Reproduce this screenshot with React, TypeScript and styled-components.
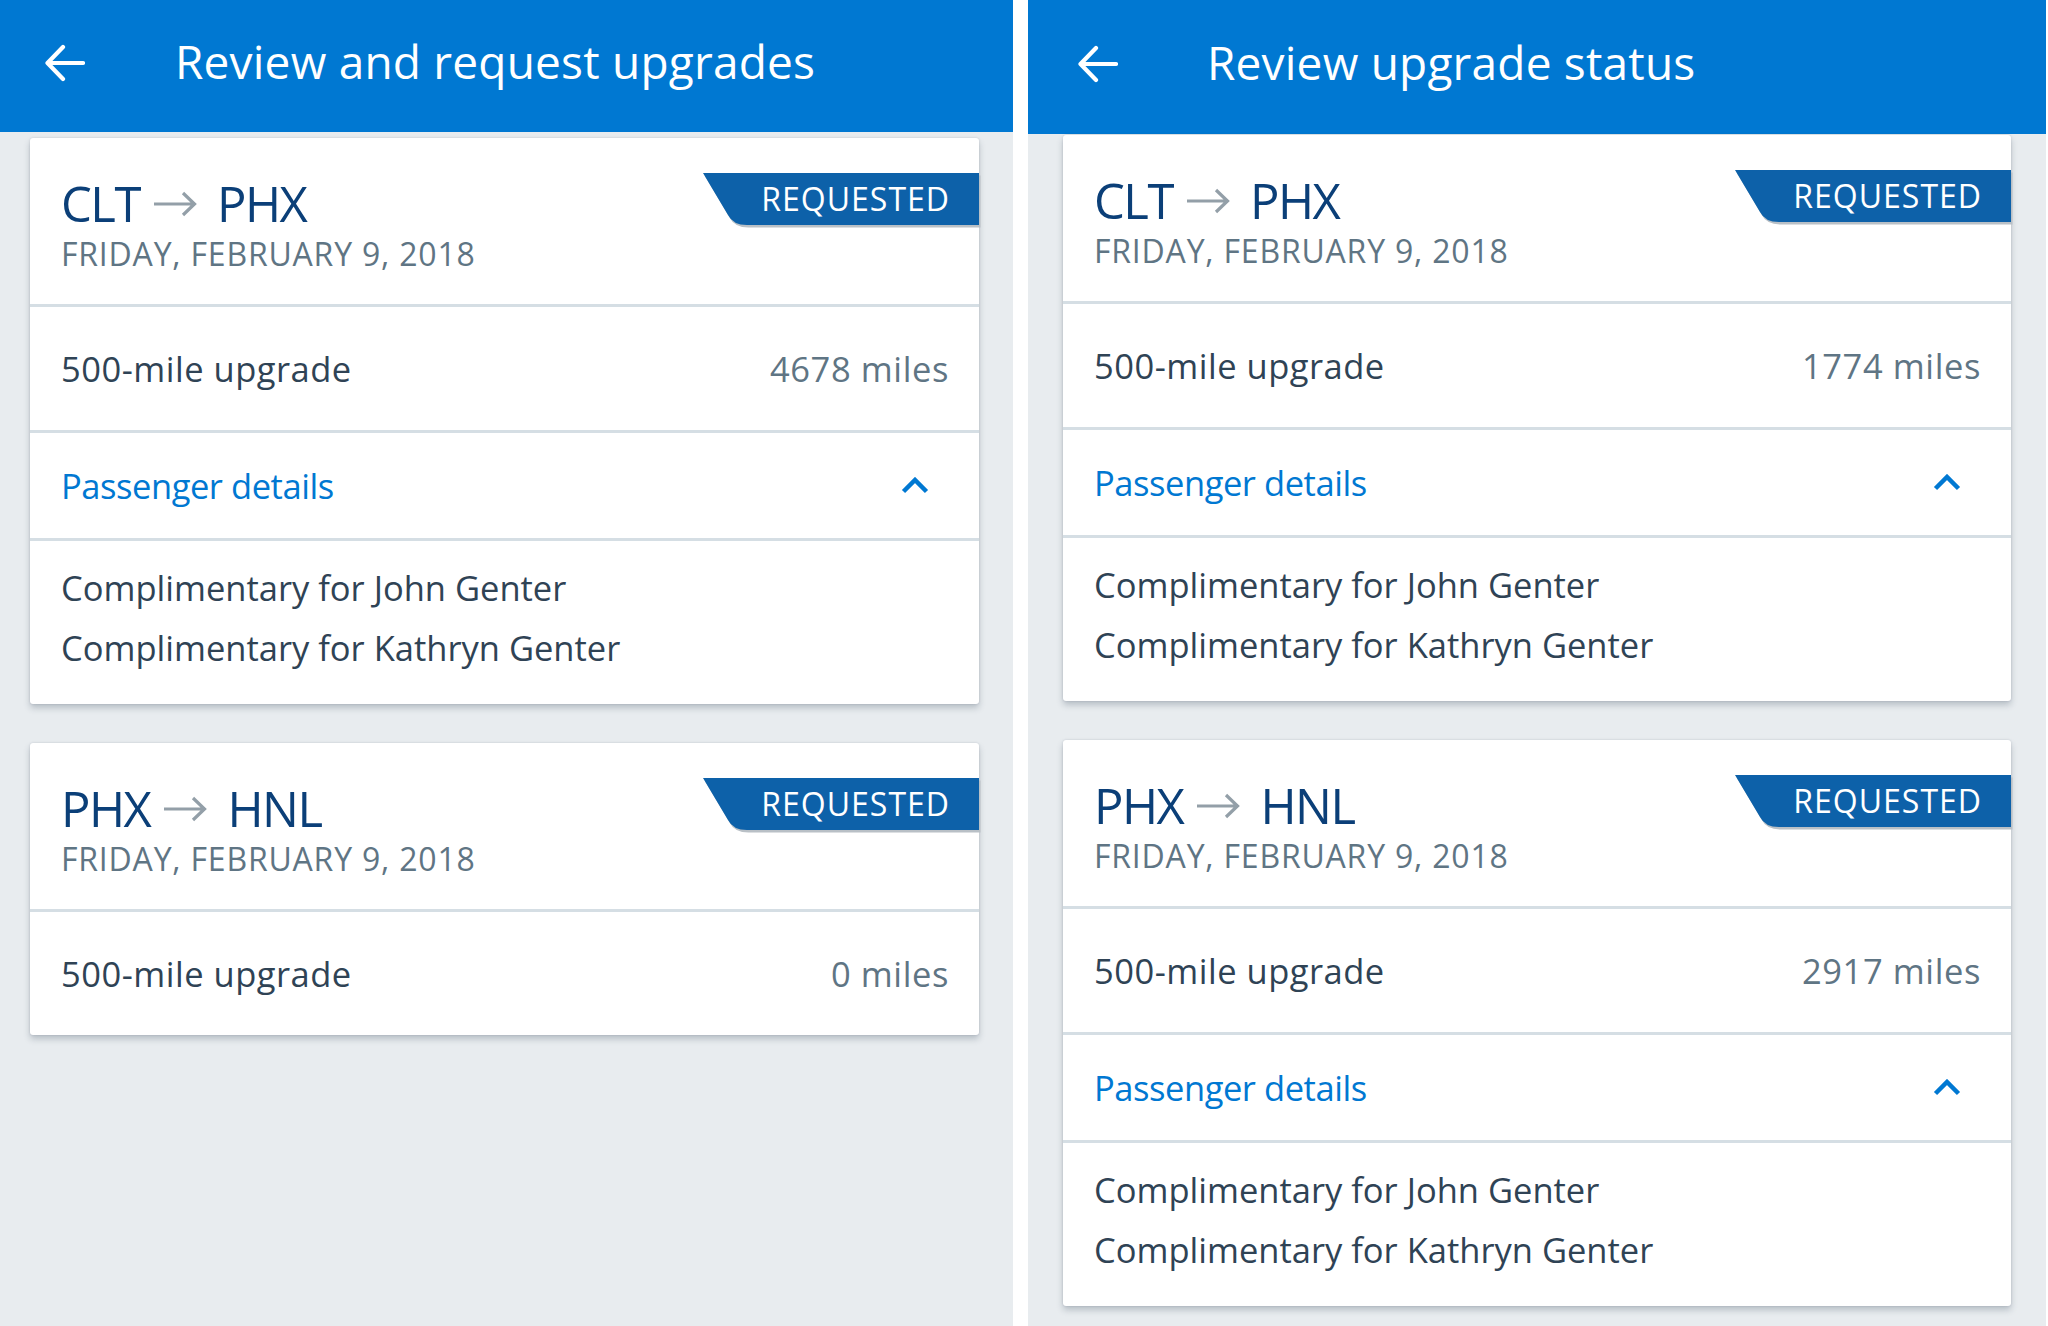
import React from "react";
import styled, { createGlobalStyle } from "styled-components";

const GlobalStyle = createGlobalStyle`
  html, body { margin: 0; padding: 0; background: #ffffff; }
  body { font-family: "Open Sans", "Noto Sans", sans-serif; }
  * { box-sizing: border-box; }
`;

const Page = styled.div`
  display: flex;
  width: 2048px;
  height: 1326px;
  overflow: hidden;
  background: #ffffff;
`;

const Panel = styled.section<{ $width: number; $gapAfter: number }>`
  width: ${(p) => p.$width}px;
  flex: none;
  height: 100%;
  margin-right: ${(p) => p.$gapAfter}px;
  background: #e8ecef;
  display: flex;
  flex-direction: column;
`;

const Header = styled.header<{ $height: number; $arrowLeft: number; $titleLeft: number }>`
  height: ${(p) => p.$height}px;
  flex: none;
  background: #0078d2;
  display: flex;
  align-items: center;
  padding-left: ${(p) => p.$arrowLeft}px;
  padding-bottom: 10px;
  gap: ${(p) => p.$titleLeft - p.$arrowLeft - 41}px;
`;

const BackIcon = styled.svg`
  width: 41px;
  height: 38px;
  flex: none;
  margin-top: 4px;
`;

const Title = styled.h1`
  margin: 0;
  font-family: "Open Sans", "Noto Sans", sans-serif;
  font-weight: 400;
  font-size: 46px;
  line-height: 56px;
  color: #ffffff;
  letter-spacing: 0.2px;
`;

const CardList = styled.div<{ $top: number; $left: number; $right: number }>`
  display: flex;
  flex-direction: column;
  gap: 39px;
  padding: ${(p) => `${p.$top}px ${p.$right}px 0 ${p.$left}px`};
`;

const Card = styled.article`
  background: #ffffff;
  border-radius: 3px;
  box-shadow: 0 4px 6px rgba(40, 60, 80, 0.25), 0 0 2px rgba(40, 60, 80, 0.18);
`;

const CardHeader = styled.div`
  position: relative;
  height: 166px;
  padding: 36px 30px 0 31px;
`;

const Route = styled.div`
  display: flex;
  align-items: center;
  gap: 17px;
  font-size: 49px;
  line-height: 58px;
  color: #0b3f78;
  letter-spacing: -1.5px;
`;

const RouteArrow = styled.svg`
  width: 44px;
  height: 26px;
  flex: none;
  margin-top: 2px;
  margin-left: -4px;
  margin-right: 3px;
`;

const DateLine = styled.div`
  margin-top: 2px;
  font-size: 32px;
  line-height: 40px;
  color: #5f7584;
  letter-spacing: 0.8px;
`;

const Badge = styled.div`
  position: absolute;
  top: 35px;
  right: 0;
  width: 276px;
  height: 52px;
  display: flex;
  align-items: center;
  justify-content: flex-end;
  padding-right: 29px;
`;

const BadgeShape = styled.svg`
  position: absolute;
  left: 0;
  top: 0;
  width: 278px;
  height: 56px;
  overflow: visible;
`;

const BadgeText = styled.span`
  position: relative;
  font-size: 32px;
  line-height: 40px;
  color: #ffffff;
  letter-spacing: 1px;
`;

const Row = styled.div<{ $height: number }>`
  height: ${(p) => p.$height}px;
  border-top: 3px solid #d5dee4;
  display: flex;
  align-items: center;
  justify-content: space-between;
  padding: 0 30px 0 31px;
`;

const Label = styled.span`
  font-size: 34.5px;
  line-height: 44px;
  color: #2f4355;
  letter-spacing: 0.5px;
`;

const Miles = styled.span`
  font-size: 34.5px;
  line-height: 44px;
  color: #5f7584;
  letter-spacing: 0.6px;
`;

const DetailsLink = styled.span`
  font-size: 34.5px;
  line-height: 44px;
  color: #0078d2;
  letter-spacing: -0.45px;
`;

const Chevron = styled.svg`
  width: 28px;
  height: 17px;
  margin-right: 20px;
  flex: none;
`;

const PassengerList = styled.div`
  height: 166px;
  border-top: 3px solid #d5dee4;
  padding: 17px 30px 0 31px;
  display: flex;
  flex-direction: column;
`;

const PassengerLine = styled.div`
  font-size: 34.5px;
  line-height: 60px;
  color: #2f4355;
  letter-spacing: 0px;
`;

type Flight = {
  from: string;
  to: string;
  miles: string;
  passengers?: string[];
};

const BackArrow = () => (
  <BackIcon viewBox="0 0 41 38">
    <path
      d="M39 19 H4 M19 3 L3.5 19 L19 35"
      fill="none"
      stroke="#ffffff"
      strokeWidth="4.2"
      strokeLinecap="round"
      strokeLinejoin="round"
    />
  </BackIcon>
);

const FlightCard = ({ flight }: { flight: Flight }) => (
  <Card>
    <CardHeader>
      <Route>
        <span>{flight.from}</span>
        <RouteArrow viewBox="0 0 44 26">
          <path
            d="M1 13 H41 M30 2 L41.5 13 L30 24"
            fill="none"
            stroke="#939fa8"
            strokeWidth="3.2"
            strokeLinejoin="miter"
          />
        </RouteArrow>
        <span>{flight.to}</span>
      </Route>
      <DateLine>FRIDAY, FEBRUARY 9, 2018</DateLine>
      <Badge>
        <BadgeShape viewBox="0 0 278 56">
          <path d="M0 0 H276 V52 H44 Q30 52 25 42 Z" fill="#b9c0c6" transform="translate(1.5 2.5)" />
          <path d="M0 0 H276 V52 H44 Q30 52 25 42 Z" fill="#0d61a9" />
        </BadgeShape>
        <BadgeText>REQUESTED</BadgeText>
      </Badge>
    </CardHeader>
    <Row $height={126}>
      <Label>500-mile upgrade</Label>
      <Miles>{flight.miles}</Miles>
    </Row>
    {flight.passengers && (
      <>
        <Row $height={108}>
          <DetailsLink>Passenger details</DetailsLink>
          <Chevron viewBox="0 0 28 17">
            <path
              d="M2.5 14.5 L14 3 L25.5 14.5"
              fill="none"
              stroke="#0078d2"
              strokeWidth="4.5"
              strokeLinejoin="miter"
            />
          </Chevron>
        </Row>
        <PassengerList>
          {flight.passengers.map((p) => (
            <PassengerLine key={p}>{p}</PassengerLine>
          ))}
        </PassengerList>
      </>
    )}
  </Card>
);

const passengers = ["Complimentary for John Genter", "Complimentary for Kathryn Genter"];

const leftFlights: Flight[] = [
  { from: "CLT", to: "PHX", miles: "4678 miles", passengers },
  { from: "PHX", to: "HNL", miles: "0 miles" },
];

const rightFlights: Flight[] = [
  { from: "CLT", to: "PHX", miles: "1774 miles", passengers },
  { from: "PHX", to: "HNL", miles: "2917 miles", passengers },
];

export default function App() {
  return (
    <>
      <GlobalStyle />
      <Page>
        <Panel $width={1013} $gapAfter={15}>
          <Header $height={132} $arrowLeft={44} $titleLeft={175}>
            <BackArrow />
            <Title>Review and request upgrades</Title>
          </Header>
          <CardList $top={6} $left={30} $right={34}>
            {leftFlights.map((f) => (
              <FlightCard key={f.from + f.to} flight={f} />
            ))}
          </CardList>
        </Panel>
        <Panel $width={1018} $gapAfter={0}>
          <Header $height={134} $arrowLeft={49} $titleLeft={179}>
            <BackArrow />
            <Title>Review upgrade status</Title>
          </Header>
          <CardList $top={1} $left={35} $right={35}>
            {rightFlights.map((f) => (
              <FlightCard key={f.from + f.to} flight={f} />
            ))}
          </CardList>
        </Panel>
      </Page>
    </>
  );
}
